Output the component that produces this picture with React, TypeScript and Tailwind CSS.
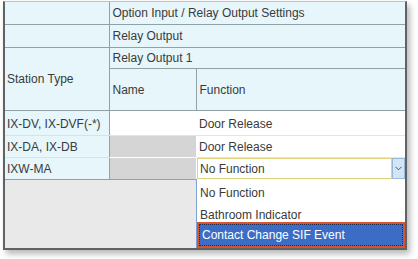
import React from 'react';

const head = 'bg-[#e6f6fb] border-b border-[#8fa2a6] px-[3px] align-middle';
const cell = 'px-[2px] align-middle';

const App: React.FC = () => {
  return (
    <div className="w-[418px] h-[259px] bg-white pt-[1px] pl-[3px] font-['Liberation_Sans',Arial,sans-serif] text-[12px] text-[#3a3a3a]">
      <div className="relative w-[404px] h-[249px] bg-[#e9e9e9] border-x-2 border-b-2 border-t border-x-[#5f6363] border-b-[#5f6363] border-t-[#b8c4c6] shadow-[3px_4px_6px_rgba(0,0,0,0.28)]">
        <table className="w-full table-fixed border-collapse leading-none">
          <colgroup>
            <col className="w-[104px]" />
            <col className="w-[87px]" />
            <col />
          </colgroup>
          <tbody>
            <tr className="h-[22px]">
              <td className={`${head} border-r`}></td>
              <td colSpan={2} className={head}>Option Input / Relay Output Settings</td>
            </tr>
            <tr className="h-[23px]">
              <td className={`${head} border-r`}></td>
              <td colSpan={2} className={head}>Relay Output</td>
            </tr>
            <tr className="h-[21px]">
              <td rowSpan={2} className={`${head} border-r pl-[2px]`}>Station Type</td>
              <td colSpan={2} className={head}>Relay Output 1</td>
            </tr>
            <tr className="h-[42px]">
              <td className={`${head} border-r pt-[2px]`}>Name</td>
              <td className={`${head} pt-[2px]`}>Function</td>
            </tr>
            <tr className="h-[25px]">
              <td className={`${cell} pt-[3px] bg-[#e6f6fb] border-r border-r-[#8fa2a6] border-b border-b-[#d6e2e5]`}>IX-DV, IX-DVF(-*)</td>
              <td className={`${cell} bg-white border-b border-[#e4e4e4]`}></td>
              <td className={`${cell} pt-[3px] px-[3px] bg-white border-b border-[#e4e4e4]`}>Door Release</td>
            </tr>
            <tr className="h-[22px]">
              <td className={`${cell} pt-[2px] bg-[#e6f6fb] border-r border-r-[#8fa2a6] border-b border-b-[#d6e2e5]`}>IX-DA, IX-DB</td>
              <td className={`${cell} bg-[#d5d5d5] border-b border-white`}></td>
              <td className={`${cell} pt-[2px] px-[3px] bg-white border-b border-[#e4e4e4]`}>Door Release</td>
            </tr>
            <tr className="h-[22px]">
              <td className={`${cell} pt-[2px] bg-[#e6f6fb] border-r border-r-[#8fa2a6] border-b border-b-[#8fa2a6]`}>IXW-MA</td>
              <td className={`${cell} bg-[#d5d5d5] border-b border-[#8fa2a6]`}></td>
              <td className="p-0 bg-white border-b border-[#8fa2a6]">
                <div className="flex h-[21px] pl-px">
                  <div className="flex-1 flex items-center px-[2px] pt-px border border-[#e2d27c]">No Function</div>
                  <div className="w-[13px] flex items-center justify-center bg-[#d2e5f6] border border-[#9bb8d8]">
                    <svg width="7" height="5" viewBox="0 0 7 5" fill="none" stroke="#4a5560" strokeWidth="1">
                      <path d="M0.5 0.8 L3.5 3.8 L6.5 0.8" />
                    </svg>
                  </div>
                </div>
              </td>
            </tr>
          </tbody>
        </table>

        <div className="absolute left-[191px] right-0 top-[177px] bottom-0 bg-white border-l border-[#7d9fd6] flex flex-col leading-none">
          <div className="h-[24px] flex items-center px-[3px] pt-[4px]">No Function</div>
          <div className="h-[19px] flex items-center px-[3px] pt-[4px]">Bathroom Indicator</div>
          <div className="flex-1 border-2 border-[#d9542c] bg-[#3b6cc6]">
            <div className="h-full flex items-center px-[2px] border border-dotted border-[#1b2a50] text-white">
              Contact Change SIF Event
            </div>
          </div>
        </div>
      </div>
    </div>
  );
};

export default App;
